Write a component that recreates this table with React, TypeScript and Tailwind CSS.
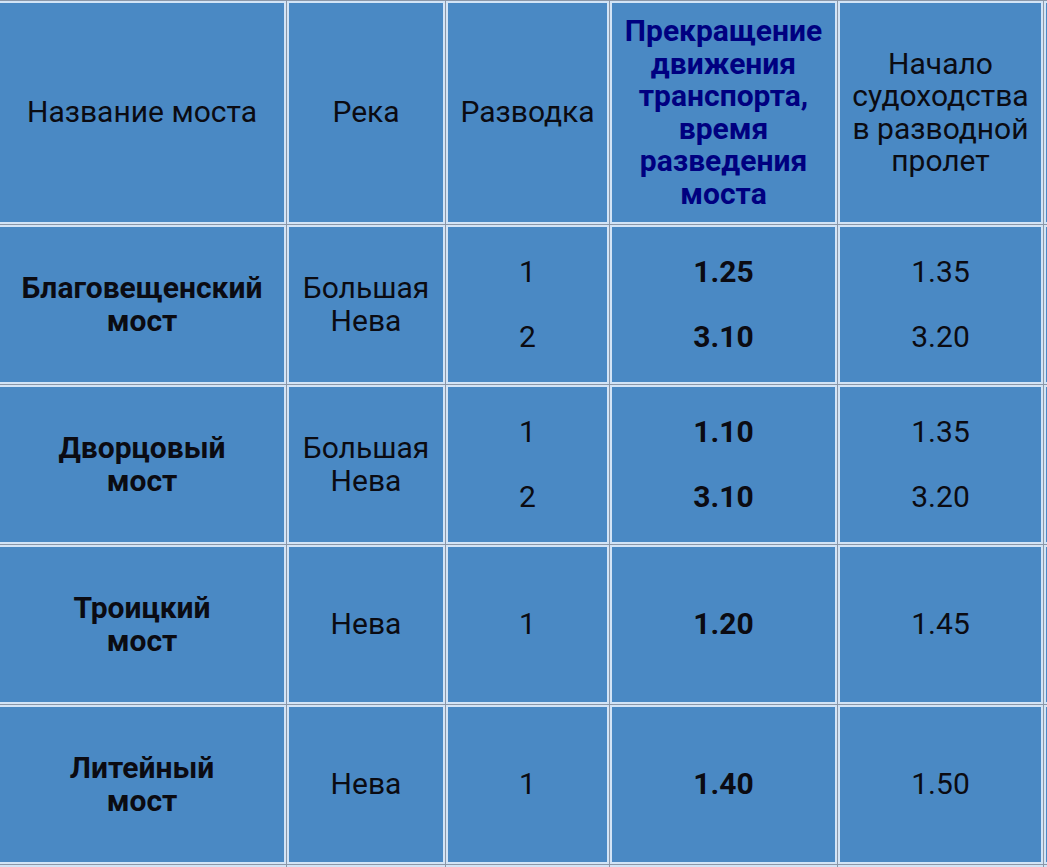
const rows = [
  { name: ['Благовещенский', 'мост'], river: ['Большая', 'Нева'], raz: ['1', '2'], stop: ['1.25', '3.10'], start: ['1.35', '3.20'] },
  { name: ['Дворцовый', 'мост'], river: ['Большая', 'Нева'], raz: ['1', '2'], stop: ['1.10', '3.10'], start: ['1.35', '3.20'] },
  { name: ['Троицкий', 'мост'], river: ['Нева'], raz: ['1'], stop: ['1.20'], start: ['1.45'] },
  { name: ['Литейный', 'мост'], river: ['Нева'], raz: ['1'], stop: ['1.40'], start: ['1.50'] },
];

const cell = 'bg-[#4a89c4] border-2 border-[#d3e4f6] flex flex-col items-center justify-center text-center whitespace-nowrap';

const Lines = ({ items }: { items: string[] }) => (
  <>
    {items.map((t, i) => (
      <span key={i}>{t}</span>
    ))}
  </>
);

// "1", blank line, "2" — same spacing as the original <br><br>
const Spaced = ({ items }: { items: string[] }) => (
  <>
    {items.map((t, i) => (
      <span key={i} className={i > 0 ? 'mt-[32.5px]' : ''}>{t}</span>
    ))}
  </>
);

export default function App() {
  return (
    <div className="w-[1047px] h-[867px] overflow-hidden bg-white">
      <div
        className="-ml-[3px] grid gap-px p-px bg-[#8b97a8] w-max text-[30px] leading-[32.5px] text-[#0b0b12]"
        style={{ fontFamily: 'Roboto, "Noto Sans", sans-serif' }}
      >
        <div className="grid grid-cols-[288px_158px_163px_227px_205px_200px] grid-rows-[223px_159px_159px_159px_159px_40px] gap-px">
          <div className={cell}>Название моста</div>
          <div className={cell}>Река</div>
          <div className={cell}>Разводка</div>
          <div className={`${cell} font-bold text-[#000080]`}>
            <Lines items={['Прекращение', 'движения', 'транспорта,', 'время', 'разведения', 'моста']} />
          </div>
          <div className={cell}>
            <Lines items={['Начало', 'судоходства', 'в разводной', 'пролет']} />
          </div>
          <div className={cell}></div>

          {rows.map((r, i) => (
            <div key={i} className="contents">
              <div className={`${cell} font-bold`}>
                <Lines items={r.name} />
              </div>
              <div className={cell}>
                <Lines items={r.river} />
              </div>
              <div className={cell}>
                <Spaced items={r.raz} />
              </div>
              <div className={`${cell} font-bold`}>
                <Spaced items={r.stop} />
              </div>
              <div className={cell}>
                <Spaced items={r.start} />
              </div>
              <div className={cell}></div>
            </div>
          ))}

          {[0, 1, 2, 3, 4, 5].map((k) => (
            <div key={k} className={cell}></div>
          ))}
        </div>
      </div>
    </div>
  );
}
